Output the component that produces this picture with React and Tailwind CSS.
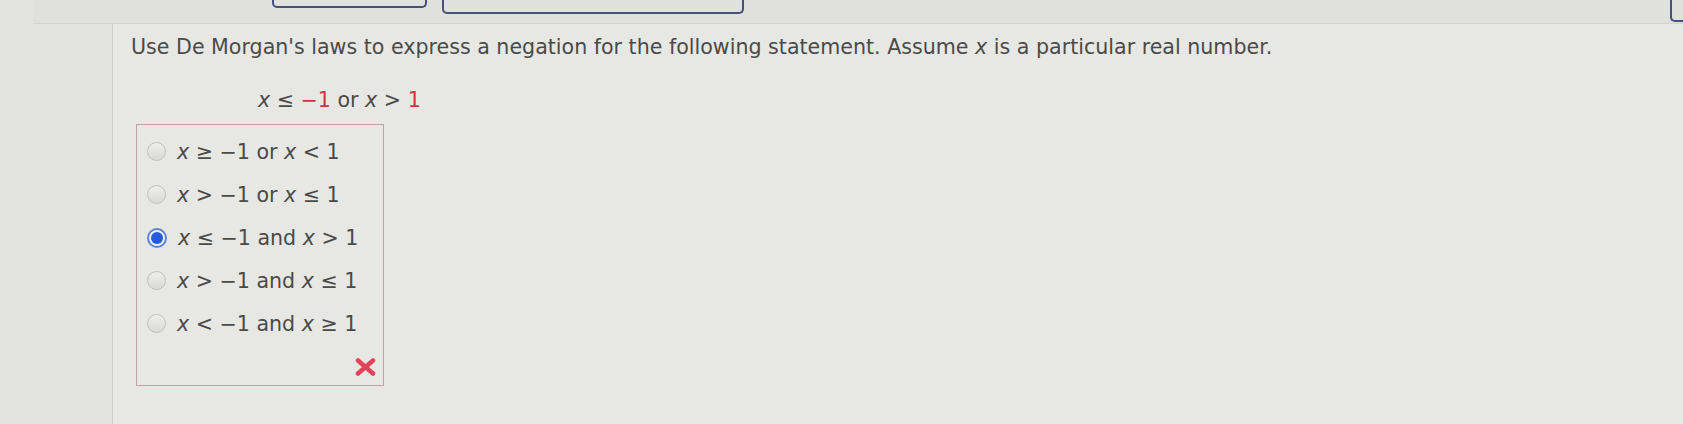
import React from "react";

function Radio({ selected }) {
  if (selected) {
    return (
      <span className="flex h-[20px] w-[20px] shrink-0 items-center justify-center rounded-full border-2 border-[#5f82d8] bg-[#eef0f6]">
        <span className="h-[12px] w-[12px] rounded-full bg-[#2459e0]" />
      </span>
    );
  }
  return (
    <span className="h-[19px] w-[19px] shrink-0 rounded-full border border-[#bfbfbc] bg-gradient-to-b from-[#eeeeec] to-[#d9d9d6]" />
  );
}

const X = () => <span className="italic">x</span>;

const options = [
  { sel: false, body: (<><X /> ≥ −1 or <X /> &lt; 1</>) },
  { sel: false, body: (<><X /> &gt; −1 or <X /> ≤ 1</>) },
  { sel: true, body: (<><X /> ≤ −1 and <X /> &gt; 1</>) },
  { sel: false, body: (<><X /> &gt; −1 and <X /> ≤ 1</>) },
  { sel: false, body: (<><X /> &lt; −1 and <X /> ≥ 1</>) },
];

export default function App() {
  return (
    <div className="flex h-[424px] w-[1683px] flex-col overflow-hidden bg-[#e7e7e4] font-['DejaVu_Sans',sans-serif] text-[#4a4a4a]">
      {/* top toolbar */}
      <div className="flex h-[24px] shrink-0">
        <div className="w-[33px] shrink-0 bg-[#e3e3e0]" />
        <div className="flex flex-1 items-start border-b border-[#d2d2ce] bg-[#e0e0dd]">
          <div className="ml-[239px] h-[8px] w-[155px] rounded-b-[5px] border-2 border-t-0 border-[#44517c]" />
          <div className="ml-[15px] h-[14px] w-[302px] rounded-b-[5px] border-2 border-t-0 border-[#44517c]" />
          <div className="ml-auto h-[22px] w-[13px] rounded-bl-[5px] border-2 border-r-0 border-t-0 border-[#44517c]" />
        </div>
      </div>

      <div className="flex flex-1">
        {/* left strip */}
        <div className="w-[113px] shrink-0 border-r border-[#cdcdc9] bg-[#e3e3e0]" />

        {/* content */}
        <div className="flex-1 pl-[18px] pt-[11px]">
          <p className="text-[20.6px] leading-[24px]">
            Use De Morgan's laws to express a negation for the following statement. Assume <X /> is a particular real number.
          </p>
          <p className="mt-[29px] pl-[127px] text-[20.6px] leading-[24px]">
            <X /> ≤ <span className="text-[#cf3346]">−1</span> or <X /> &gt; <span className="text-[#cf3346]">1</span>
          </p>

          <div className="ml-[5px] mt-[12px] w-[248px] border border-[#c4a0a5] pb-[9px] pl-[10px] pr-[7px] pt-[5px]">
            {options.map((o, i) => (
              <div key={i} className="flex h-[43px] items-center gap-[11px] text-[20.6px] leading-[24px]">
                <Radio selected={o.sel} />
                <span>{o.body}</span>
              </div>
            ))}
            <div className="mt-[13px] flex justify-end">
              <svg width="21" height="18" viewBox="0 0 21 18">
                <path d="M3 2.5 L18 15.5 M18 2.5 L3 15.5" stroke="#e0435a" strokeWidth="4.5" strokeLinecap="round" />
              </svg>
            </div>
          </div>
        </div>
      </div>
    </div>
  );
}
